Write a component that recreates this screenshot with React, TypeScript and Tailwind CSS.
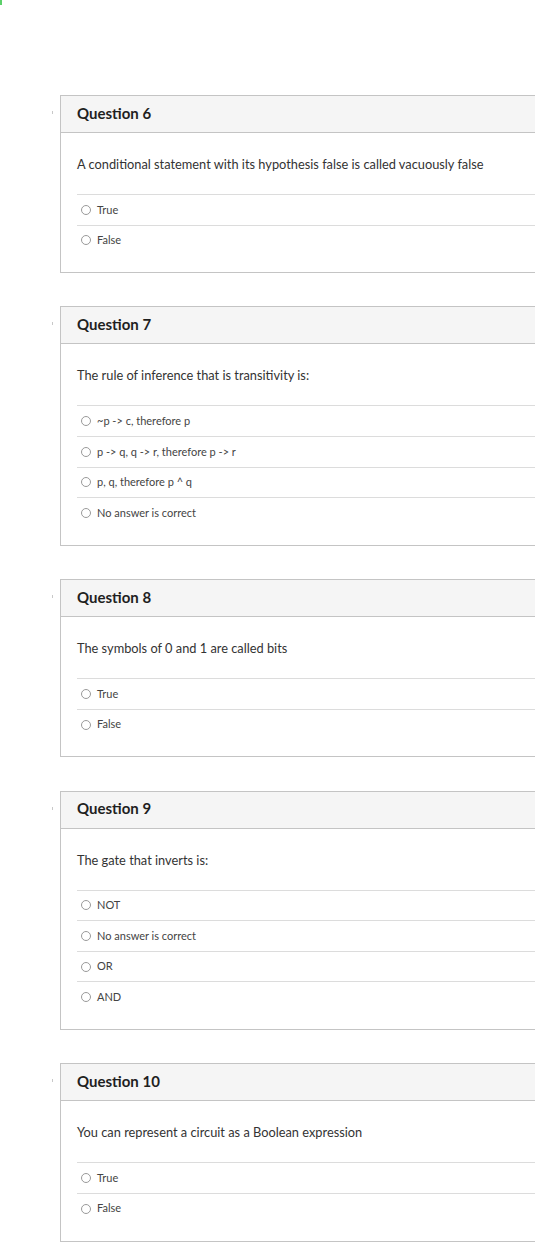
import React from "react";

type Q = { n: number; text: string; options: string[] };

const questions: Q[] = [
  { n: 6, text: "A conditional statement with its hypothesis false is called vacuously false", options: ["True", "False"] },
  { n: 7, text: "The rule of inference that is transitivity is:", options: ["~p -> c, therefore p", "p -> q, q -> r, therefore p -> r", "p, q, therefore p ^ q", "No answer is correct"] },
  { n: 8, text: "The symbols of 0 and 1 are called bits", options: ["True", "False"] },
  { n: 9, text: "The gate that inverts is:", options: ["NOT", "No answer is correct", "OR", "AND"] },
  { n: 10, text: "You can represent a circuit as a Boolean expression", options: ["True", "False"] },
];

function Card({ q }: { q: Q }) {
  return (
    <div className="flex">
      <div className="w-[60px] shrink-0">
        <div className="ml-[52px] mt-[16px] w-[1px] h-[3px] bg-[#c8c8c8]" />
      </div>
      <div className="w-[500px] shrink-0 border border-[#c4c4c4] bg-white">
        <div className="h-[37px] bg-[#f5f5f5] border-b border-[#c4c4c4] pl-[16px] flex items-center">
          <span className="text-[15px] font-bold text-[#1f1f1f] -mt-[2px]">Question {q.n}</span>
        </div>
        <div className="pl-[16px] pt-[22px] pb-[17px]">
          <div className="text-[12.8px] leading-[18px] text-[#333]">{q.text}</div>
          <div className="mt-[21px]">
            {q.options.map((o, i) => (
              <div key={i} className="border-t border-[#dcdcdc] h-[30.6px] flex items-center pl-[4px]">
                <span className="w-[10px] h-[10px] rounded-full border border-[#9a9a9a] bg-white shrink-0" />
                <span className="ml-[6px] text-[11px] text-[#444]">{o}</span>
              </div>
            ))}
          </div>
        </div>
      </div>
    </div>
  );
}

export default function App() {
  return (
    <div className="w-[535px] h-[1245px] overflow-hidden bg-white relative" style={{ fontFamily: "Lato, 'Open Sans', sans-serif" }}>
      <div className="absolute left-0 top-0 w-[2px] h-[5px] bg-[#5cd06a]" />
      <div className="pt-[95px] flex flex-col gap-[33.3px]">
        {questions.map((q) => (
          <Card key={q.n} q={q} />
        ))}
      </div>
    </div>
  );
}
